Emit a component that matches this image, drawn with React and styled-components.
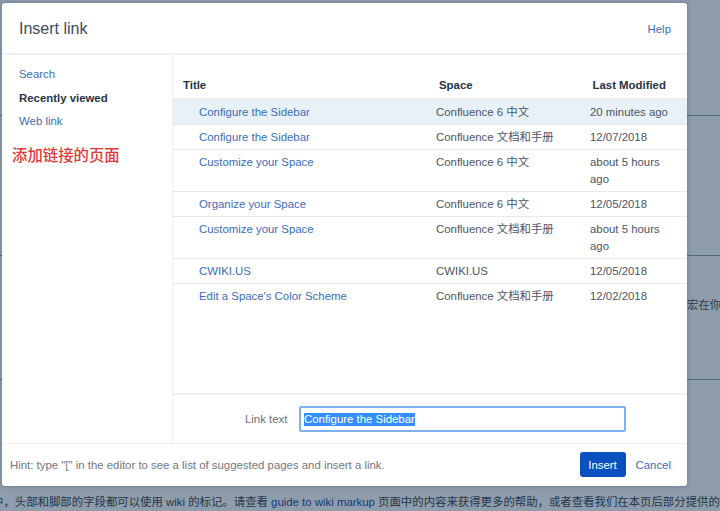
import React from 'react'
import styled, { createGlobalStyle } from 'styled-components'

const rows = [
  { title: 'Configure the Sidebar', space: 'Confluence 6 中文', modified: '20 minutes ago', active: true },
  { title: 'Configure the Sidebar', space: 'Confluence 文档和手册', modified: '12/07/2018' },
  { title: 'Customize your Space', space: 'Confluence 6 中文', modified: 'about 5 hours ago' },
  { title: 'Organize your Space', space: 'Confluence 6 中文', modified: '12/05/2018' },
  { title: 'Customize your Space', space: 'Confluence 文档和手册', modified: 'about 5 hours ago' },
  { title: 'CWIKI.US', space: 'CWIKI.US', modified: '12/05/2018' },
  { title: "Edit a Space's Color Scheme", space: 'Confluence 文档和手册', modified: '12/02/2018', last: true },
]

const App = () => {
  return (
    <>
      <GlobalStyle />
      <Page>
        <Rule $top={115} />
        <Rule $top={139} />
        <SideNote>宏在你</SideNote>
        <Rule $top={67} />
        <PageText>
          中，头部和脚部的字段都可以使用 wiki 的标记。请查看 <PageLink>guide to wiki markup</PageLink> 页面中的内容来获得更多的帮助，或者查看我们在本页后部分提供的
        </PageText>
        <Dialog>
          <Header>
            <h2>Insert link</h2>
            <Link>Help</Link>
          </Header>
          <Body>
            <Nav>
              <NavItem>Search</NavItem>
              <NavItem $current>Recently viewed</NavItem>
              <NavItem>Web link</NavItem>
              <Note>添加链接的页面</Note>
            </Nav>
            <Main>
              <TableArea>
                <Table>
                  <thead>
                    <tr>
                      <th className="title">Title</th>
                      <th className="space">Space</th>
                      <th className="modified">Last Modified</th>
                    </tr>
                  </thead>
                  <tbody>
                    {rows.map((row, i) => (
                      <Row key={i} $active={row.active} $last={row.last}>
                        <td className="title"><Link>{row.title}</Link></td>
                        <td className="space">{row.space}</td>
                        <td className="modified">{row.modified}</td>
                      </Row>
                    ))}
                  </tbody>
                </Table>
              </TableArea>
              <LinkForm>
                <label>Link text</label>
                <Field><Selected>Configure the Sidebar</Selected></Field>
              </LinkForm>
            </Main>
          </Body>
          <Footer>
            <Hint>Hint: type "[" in the editor to see a list of suggested pages and insert a link.</Hint>
            <Actions>
              <InsertButton>Insert</InsertButton>
              <Link>Cancel</Link>
            </Actions>
          </Footer>
        </Dialog>
      </Page>
    </>
  )
}

export default App

const GlobalStyle = createGlobalStyle`
  html, body {
    margin: 0;
    padding: 0;
    overflow: hidden;
  }
  body {
    font-family: "Liberation Sans", "Noto Sans CJK SC", sans-serif;
    font-size: 11.4px;
    color: #42526e;
  }
`

const Page = styled.div`
  position: relative;
  width: 720px;
  height: 511px;
  overflow: hidden;
  background: #8e9cab;
`

const Rule = styled.div`
  height: 1px;
  margin-top: ${p => p.$top}px;
  background: #54697f;
`

const SideNote = styled.div`
  margin: 42px 0 0 687px;
  height: 14px;
  line-height: 14px;
  white-space: nowrap;
  color: #2b3a4c;
`

const PageText = styled.div`
  margin: 115px 0 0 -8px;
  height: 14px;
  line-height: 14px;
  white-space: nowrap;
  color: #26364a;
`

const PageLink = styled.span`
  color: #153a78;
`

const Dialog = styled.div`
  position: absolute;
  left: 2px;
  top: 3px;
  width: 685px;
  height: 483px;
  display: flex;
  flex-direction: column;
  background: #fff;
  border-radius: 3px;
  box-shadow: 0 0 4px rgba(9, 30, 66, 0.3);
`

const Link = styled.a`
  color: #3b6cb8;
  cursor: pointer;
`

const Header = styled.header`
  flex: none;
  height: 48px;
  padding: 2px 16px 0 17px;
  display: flex;
  align-items: center;
  justify-content: space-between;
  border-bottom: 2px solid #eff0f2;

  h2 {
    margin: 0;
    font-size: 16px;
    font-weight: 400;
    color: #3a4a60;
  }
`

const Body = styled.div`
  flex: 1;
  min-height: 0;
  display: flex;
`

const Nav = styled.nav`
  flex: none;
  width: 171px;
  box-sizing: border-box;
  padding-top: 8px;
  display: flex;
  flex-direction: column;
  border-right: 1px solid #f0f1f3;
`

const NavItem = styled.div`
  height: 23.7px;
  line-height: 23.7px;
  padding-left: 17px;
  color: ${p => (p.$current ? '#253347' : '#3b6cb8')};
  font-weight: ${p => (p.$current ? 700 : 400)};
`

const Note = styled.div`
  margin: 12px 0 0 10px;
  font-size: 15.4px;
  font-weight: 500;
  line-height: 20px;
  color: #e0393a;
`

const Main = styled.div`
  flex: 1;
  min-width: 0;
  display: flex;
  flex-direction: column;
`

const TableArea = styled.div`
  flex: 1;
  padding-top: 21px;
  border-bottom: 2px solid #eff0f2;
`

const Table = styled.table`
  width: 100%;
  table-layout: fixed;
  border-collapse: separate;
  border-spacing: 0;

  th {
    box-sizing: border-box;
    padding: 0 0 4px;
    line-height: 18px;
    text-align: left;
    font-weight: 700;
    color: #253347;
    border-bottom: 2px solid #eceef1;
  }
  th.title { width: 263px; padding-left: 10px; }
  th.space { width: 154px; padding-left: 3px; }
  th.modified { padding-left: 2.5px; }
`

const Row = styled.tr`
  td {
    box-sizing: border-box;
    padding: 4px 0 ${p => (p.$active ? 2 : 3)}px;
    line-height: 17px;
    vertical-align: top;
    color: #4a5568;
    background: ${p => (p.$active ? '#e9f1f8' : '#fff')};
    border-bottom: ${p => (p.$last ? 'none' : p.$active ? '2px solid #e6ebf0' : '1px solid #e7e9ec')};
  }
  td.title { padding-left: 26px; }
  td.modified { padding-right: 10px; }
`

const LinkForm = styled.div`
  flex: none;
  height: 48px;
  display: flex;
  align-items: center;
  gap: 11px;
  padding-left: 72px;

  label {
    width: 43px;
    white-space: nowrap;
    color: #6b6f76;
  }
`

const Field = styled.div`
  width: 327px;
  height: 26px;
  box-sizing: border-box;
  display: flex;
  align-items: center;
  padding-left: 3px;
  border: 2px solid #7eb0ea;
  border-radius: 2px;
  color: #172b4d;
`

const Selected = styled.span`
  background: #338fff;
  color: #fff;
  line-height: 13px;
`

const Footer = styled.footer`
  flex: none;
  height: 41px;
  display: flex;
  align-items: center;
  justify-content: space-between;
  padding: 0 16px 1px 8px;
  border-top: 1px solid #eff0f2;
`

const Hint = styled.span`
  color: #72767c;
`

const Actions = styled.div`
  display: flex;
  align-items: center;
  gap: 10px;
`

const InsertButton = styled.button`
  width: 46px;
  height: 25px;
  padding: 0;
  border: none;
  border-radius: 3px;
  background: #0a50bf;
  color: #fff;
  font: inherit;
`
